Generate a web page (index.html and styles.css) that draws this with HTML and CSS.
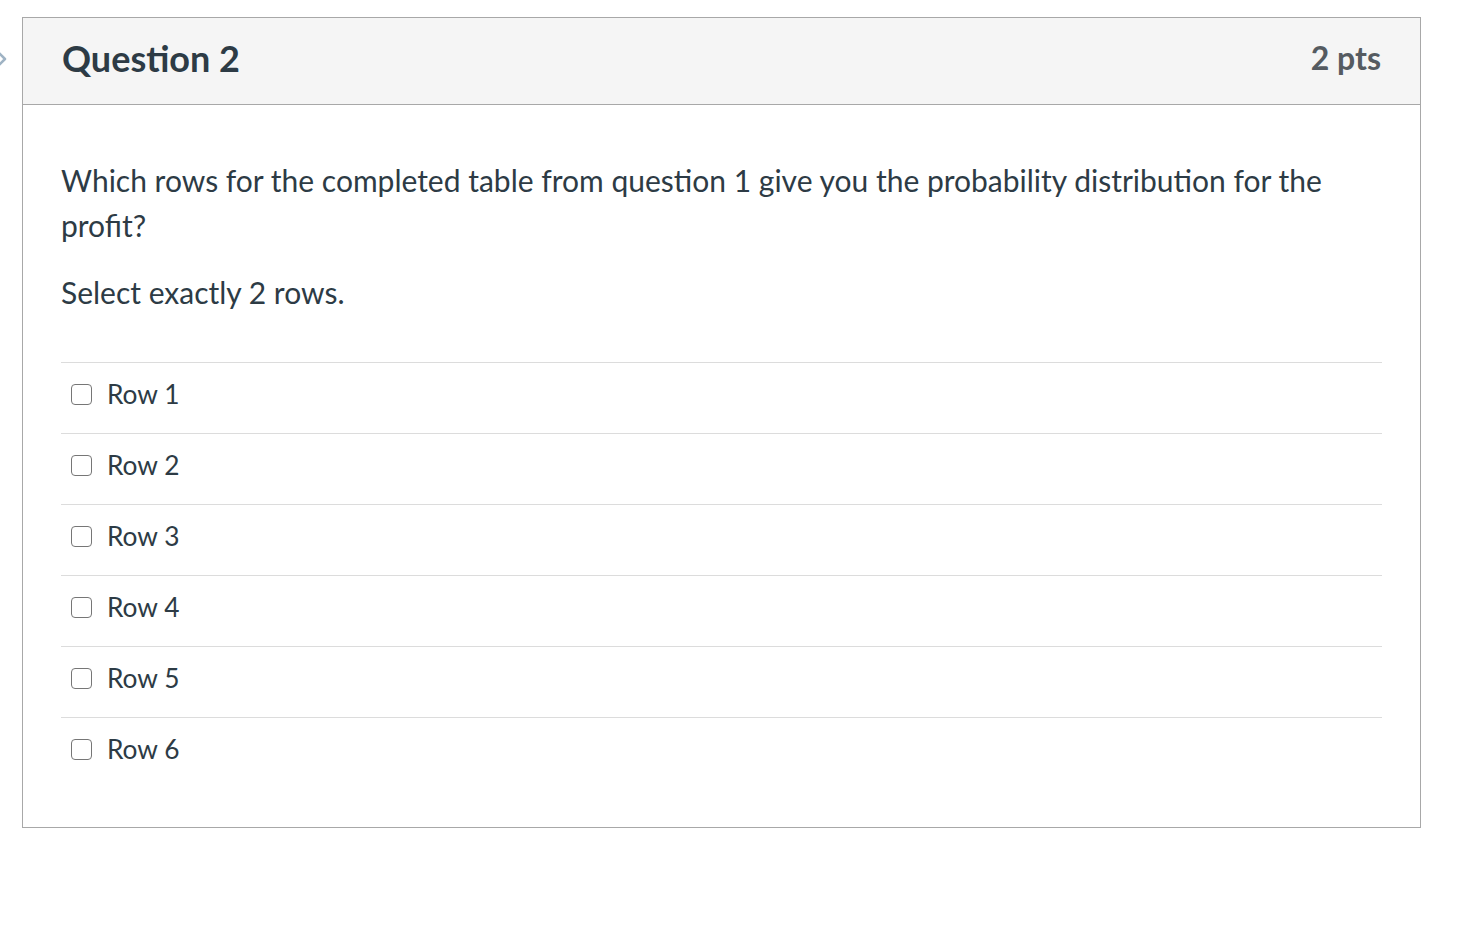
FILE: index.html
```html
<!DOCTYPE html>
<html lang="en">
<head>
<meta charset="utf-8">
<title>Question 2</title>
<link rel="stylesheet" href="styles.css">
</head>
<body>
<div class="page">
  <svg class="flag" width="12" height="20" viewBox="0 0 12 20" aria-hidden="true">
    <path d="M-2 3 L5 10 L-2 17" fill="none" stroke="#9fb3c4" stroke-width="2.5" stroke-linejoin="round"/>
  </svg>
  <div class="card">
    <div class="card-header">
      <h2 class="title">Question 2</h2>
      <span class="pts">2 pts</span>
    </div>
    <div class="card-body">
      <p class="text">Which rows for the completed table from question 1 give you the probability distribution for the profit?</p>
      <p class="text">Select exactly 2 rows.</p>
      <ul class="answers">
        <li class="answer"><span class="box"></span><span class="label">Row 1</span></li>
        <li class="answer"><span class="box"></span><span class="label">Row 2</span></li>
        <li class="answer"><span class="box"></span><span class="label">Row 3</span></li>
        <li class="answer"><span class="box"></span><span class="label">Row 4</span></li>
        <li class="answer"><span class="box"></span><span class="label">Row 5</span></li>
        <li class="answer"><span class="box"></span><span class="label">Row 6</span></li>
      </ul>
    </div>
  </div>
</div>
</body>
</html>
```
FILE: styles.css
```css
html, body {
  margin: 0;
  padding: 0;
  background: #ffffff;
}
body {
  font-family: Lato, "Open Sans", Arial, sans-serif;
  color: #2d3b45;
}
.page {
  position: relative;
  padding: 17px 0 0 22px;
}
.flag {
  position: absolute;
  left: 0;
  top: 49px;
}
.card {
  width: 1397px;
  border: 1px solid #a8a8a8;
  background: #fff;
}
.card-header {
  display: flex;
  justify-content: space-between;
  align-items: center;
  padding: 0 39px 6px 39px;
  box-sizing: border-box;
  height: 87px;
  background: #f5f5f5;
  border-bottom: 1px solid #a8a8a8;
}
.title {
  margin: 0;
  font-size: 36px;
  font-weight: 700;
  color: #2d3b45;
  line-height: 1;
}
.pts {
  font-size: 32px;
  font-weight: 700;
  color: #555b61;
  line-height: 1;
}
.card-body {
  padding: 53px 38px 39px 38px;
}
.text {
  margin: 0 0 22px 0;
  font-size: 30px;
  line-height: 45px;
}
.answers {
  list-style: none;
  margin: 47px 0 0 0;
  padding: 0;
}
.answer {
  display: flex;
  align-items: center;
  border-top: 1px solid #dcdcdc;
  padding: 0 0 7px 10px;
  box-sizing: border-box;
  height: 71px;
}
.box {
  width: 19px;
  height: 19px;
  border: 1.6px solid #767676;
  border-radius: 4px;
  background: #fff;
  flex: none;
}
.label {
  margin-left: 15px;
  font-size: 26.3px;
  line-height: 39px;
}
```
